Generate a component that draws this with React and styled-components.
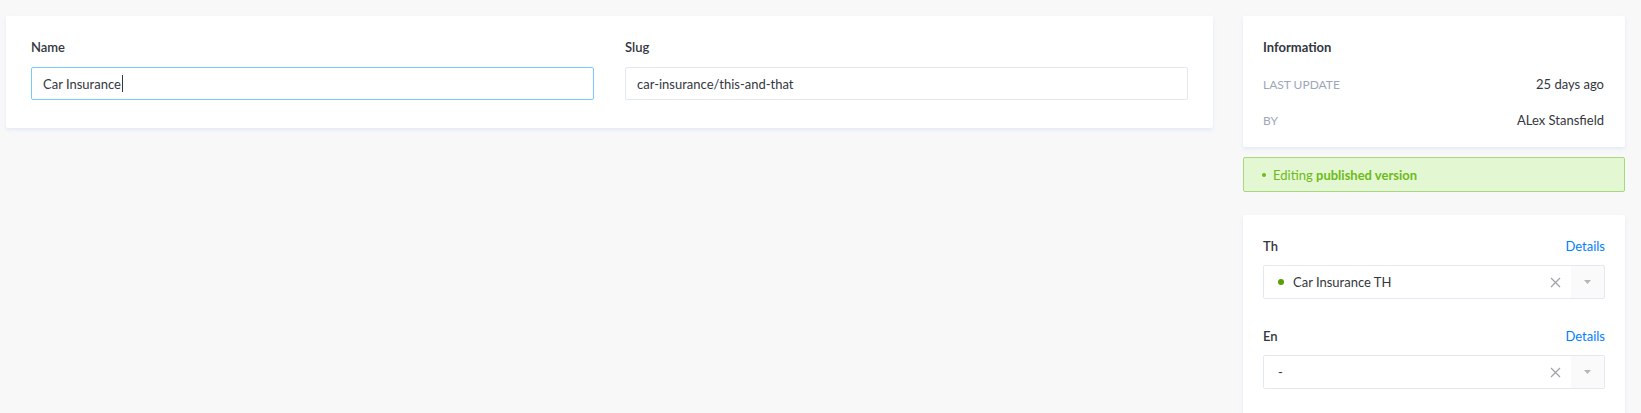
import React from 'react';
import styled, { createGlobalStyle } from 'styled-components';

const GlobalStyle = createGlobalStyle`
  * { box-sizing: border-box; }
  body {
    margin: 0;
    background: #f8f8f9;
    font-family: Lato, "Open Sans", "Liberation Sans", sans-serif;
    color: #333740;
    -webkit-font-smoothing: antialiased;
  }
`;

const Page = styled.div`
  display: grid;
  grid-template-columns: 1fr 382px;
  column-gap: 30px;
  align-items: start;
  padding: 16px 16px 0 6px;
  height: 413px;
  overflow: hidden;
`;

const Card = styled.div`
  background: #fff;
  border-radius: 2px;
  box-shadow: 0 2px 4px #e3e9f3;
`;

const FormCard = styled(Card)`
  display: grid;
  grid-template-columns: 1fr 1fr;
  column-gap: 31px;
  padding: 22px 25px 28px 25px;
`;

const Field = styled.div`
  display: flex;
  flex-direction: column;
`;

const Label = styled.div`
  font-size: 13px;
  font-weight: 600;
  line-height: 18px;
  color: #333740;
  margin-bottom: ${p => p.$gap ?? 11}px;
`;

const Input = styled.div`
  height: 33px;
  display: flex;
  align-items: center;
  padding: 0 11px;
  font-size: 13px;
  color: #333740;
  border: 1px solid ${p => (p.$focus ? '#78caff' : '#e3e9f3')};
  border-radius: 2px;
  background: #fff;
`;

const Caret = styled.span`
  display: inline-block;
  width: 1px;
  height: 17px;
  background: #333740;
  margin-left: 1px;
`;

const Side = styled.div`
  display: flex;
  flex-direction: column;
`;

const InfoCard = styled(Card)`
  padding: 21px 21px 9px 20px;
`;

const CardTitle = styled.div`
  font-size: 13px;
  font-weight: 700;
  line-height: 20px;
  margin-bottom: 9px;
`;

const InfoRow = styled.div`
  display: flex;
  justify-content: space-between;
  align-items: center;
  height: 36px;
`;

const InfoKey = styled.span`
  font-size: 12px;
  text-transform: uppercase;
  color: #9ea7b8;
`;

const InfoValue = styled.span`
  font-size: 13px;
  color: #333740;
`;

const Banner = styled.div`
  margin-top: 10px;
  height: 35px;
  display: flex;
  align-items: center;
  gap: 7px;
  padding: 0 18px;
  background: #e3f7d3;
  border: 1px solid #a7d880;
  border-radius: 2px;
  font-size: 13px;
  color: #6dbb1a;
  b { font-weight: 700; }
`;

const Dot = styled.span`
  width: ${p => p.$size || 4}px;
  height: ${p => p.$size || 4}px;
  border-radius: 50%;
  background: ${p => p.$color || '#6dbb1a'};
  flex: none;
`;

const LangCard = styled(Card)`
  margin-top: 23px;
  padding: 22px 20px 40px 20px;
  min-height: 220px;
`;

const LangBlock = styled.div`
  & + & { margin-top: 28px; }
`;

const LangHead = styled.div`
  display: flex;
  justify-content: space-between;
  align-items: center;
  margin-bottom: 10px;
`;

const DetailsLink = styled.a`
  font-size: 13px;
  color: #007eff;
  text-decoration: none;
  line-height: 18px;
`;

const Select = styled.div`
  height: 34px;
  display: flex;
  align-items: stretch;
  border: 1px solid #e3e9f3;
  border-radius: 2px;
  background: #fff;
  overflow: hidden;
`;

const SelectValue = styled.div`
  flex: 1;
  display: flex;
  align-items: center;
  gap: 9px;
  padding-left: 14px;
  font-size: 13px;
  color: #333740;
`;

const Clear = styled.div`
  width: 32px;
  display: flex;
  align-items: center;
  justify-content: center;
`;

const Arrow = styled.div`
  width: 33px;
  display: flex;
  align-items: center;
  justify-content: center;
  background: #fafafb;
`;

const ClearIcon = () => (
  <svg width="11" height="11" viewBox="0 0 11 11">
    <path d="M1 1L10 10M10 1L1 10" stroke="#9ea1a8" strokeWidth="1.2" />
  </svg>
);

const ArrowIcon = () => (
  <svg width="7" height="4" viewBox="0 0 7 4">
    <path d="M0 0H7L3.5 4Z" fill="#b3b5b9" />
  </svg>
);

const LangSelect = ({ name, value, published }) => (
  <LangBlock>
    <LangHead>
      <Label $gap={0}>{name}</Label>
      <DetailsLink href="#">Details</DetailsLink>
    </LangHead>
    <Select>
      <SelectValue>
        {published && <Dot $size={6} $color="#5a9e06" />}
        {value}
      </SelectValue>
      <Clear><ClearIcon /></Clear>
      <Arrow><ArrowIcon /></Arrow>
    </Select>
  </LangBlock>
);

export default function App() {
  return (
    <>
      <GlobalStyle />
      <Page>
        <FormCard>
          <Field>
            <Label>Name</Label>
            <Input $focus>Car Insurance<Caret /></Input>
          </Field>
          <Field>
            <Label>Slug</Label>
            <Input>car-insurance/this-and-that</Input>
          </Field>
        </FormCard>
        <Side>
          <InfoCard>
            <CardTitle>Information</CardTitle>
            <InfoRow>
              <InfoKey>Last update</InfoKey>
              <InfoValue>25 days ago</InfoValue>
            </InfoRow>
            <InfoRow>
              <InfoKey>By</InfoKey>
              <InfoValue>ALex Stansfield</InfoValue>
            </InfoRow>
          </InfoCard>
          <Banner>
            <Dot />
            <span>Editing <b>published version</b></span>
          </Banner>
          <LangCard>
            <LangSelect name="Th" value="Car Insurance TH" published />
            <LangSelect name="En" value="-" />
          </LangCard>
        </Side>
      </Page>
    </>
  );
}
